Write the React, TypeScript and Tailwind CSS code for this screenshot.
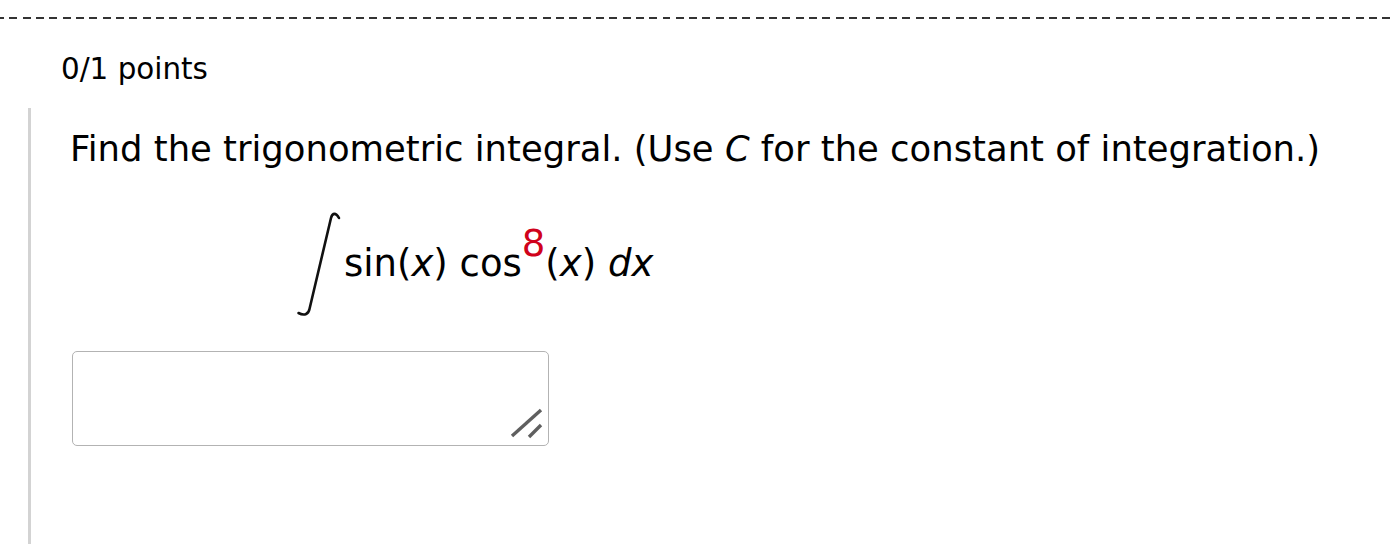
import React from "react";

export default function App() {
  return (
    <div className="w-[1391px] h-[544px] overflow-hidden bg-white text-black font-['DejaVu_Sans',Verdana,sans-serif]">
      <div className="pt-[17px]">
        <div className="h-[2px] w-full bg-[repeating-linear-gradient(to_right,#333_0_4px,transparent_4px_9.33px,#333_9.33px_13.33px)]" />
      </div>
      <div className="pl-[61px] pt-[30px] text-[29.4px] leading-[40px]">0/1 points</div>
      <div className="ml-[28px] mt-[19px] border-l-[3px] border-[#d3d3d3] pl-[39px] pt-[19px] h-[436px]">
        <div className="text-[35.4px] leading-[44px] whitespace-nowrap">
          Find the trigonometric integral. (Use <i>C</i> for the constant of integration.)
        </div>
        <div className="mt-[40px] pl-[227px] flex items-center">
          <svg width="46" height="106" viewBox="0 0 46 106" className="shrink-0">
            <path
              d="M42 7 C39 1.5 35.5 1.5 34 7 L12.5 98 C11.5 103.5 7 105 1.5 102"
              fill="none"
              stroke="#111"
              strokeWidth="2.6"
              strokeLinecap="round"
            />
          </svg>
          <div className="text-[37px] leading-[44px] ml-[1px] whitespace-nowrap">
            sin(<i>x</i>) cos<span className="relative top-[-20px] text-[#d0021b]">8</span>(<i>x</i>) <i>dx</i>
          </div>
        </div>
        <div className="relative mt-[34px] ml-[2px] w-[477px] h-[95px] rounded-[5px] border border-[#b3b3b3] bg-white">
          <svg className="absolute right-[5px] bottom-[6px]" width="33" height="31" viewBox="0 0 33 31">
            <line x1="2" y1="28" x2="31" y2="2" stroke="#5f5f5f" strokeWidth="3.4" />
            <line x1="19" y1="29" x2="31" y2="17" stroke="#5f5f5f" strokeWidth="3.4" />
          </svg>
        </div>
      </div>
    </div>
  );
}
